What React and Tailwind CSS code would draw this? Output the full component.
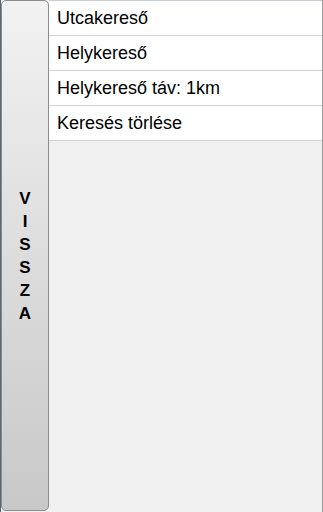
import React from 'react';

const items = ['Utcakereső', 'Helykereső', 'Helykereső táv: 1km', 'Keresés törlése'];

const App = () => {
  return (
    <div
      className="flex h-[512px] w-[323px] bg-[#f0f0f0] border-l border-[#5c6670]"
      style={{ fontFamily: '"Liberation Sans", Arial, sans-serif' }}
    >
      <button className="flex h-[511px] w-[48px] flex-none flex-col items-center justify-center rounded-[5px] border border-[#8c8c8c] bg-gradient-to-b from-[#f2f2f2] to-[#c8c8c8] text-[17px] font-bold leading-[23px] text-black">
        {'VISSZA'.split('').map((c, i) => (
          <span key={i}>{c}</span>
        ))}
      </button>
      <div className="flex-1 border-r border-[#9a9a9a]">
        <ul className="border-t border-[#c8ccd4]">
          {items.map(t => (
            <li key={t} className="h-[35px] bg-white border-b border-[#d2d2d2] pl-[8px] text-[18px] leading-[34px] text-black">
              {t}
            </li>
          ))}
        </ul>
      </div>
    </div>
  );
};

export default App;
